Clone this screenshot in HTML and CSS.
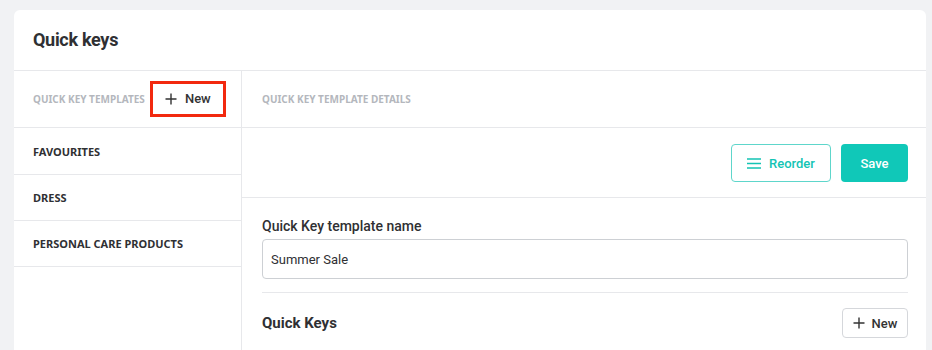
FILE: index.html
```html
<!DOCTYPE html>
<html lang="en">

<head>
    <meta charset="UTF-8">
    <meta name="viewport" content="width=device-width, initial-scale=1.0">
    <title>Quick keys</title>
    <link rel="stylesheet" href="styles.css">
</head>

<body>
    <div class="card">
        <h1 class="card-title">Quick keys</h1>
        <div class="panes">
            <div class="pane-left">
                <div class="pane-head">
                    <span class="caption">Quick key templates</span>
                    <span class="highlight">
                        <button class="btn btn-plain">
                            <svg width="12" height="12" viewBox="0 0 12 12"><path d="M6 0.5v11M0.5 6h11" stroke="#333" stroke-width="1.4" fill="none"/></svg>
                            New
                        </button>
                    </span>
                </div>
                <ul class="template-list">
                    <li>Favourites</li>
                    <li>Dress</li>
                    <li>Personal care products</li>
                </ul>
            </div>
            <div class="pane-right">
                <div class="pane-head">
                    <span class="caption">Quick key template details</span>
                </div>
                <div class="toolbar">
                    <button class="btn btn-outline">
                        <svg width="14" height="11" viewBox="0 0 14 11"><path d="M0 1h14M0 5.5h14M0 10h14" stroke="#14c4b4" stroke-width="1.5" fill="none"/></svg>
                        Reorder
                    </button>
                    <button class="btn btn-primary">Save</button>
                </div>
                <div class="form">
                    <label class="field-label" for="name">Quick Key template name</label>
                    <input id="name" class="field" type="text" value="Summer Sale">
                    <div class="section-head">
                        <h2>Quick Keys</h2>
                        <button class="btn btn-plain btn-small">
                            <svg width="12" height="12" viewBox="0 0 12 12"><path d="M6 0.5v11M0.5 6h11" stroke="#333" stroke-width="1.4" fill="none"/></svg>
                            New
                        </button>
                    </div>
                </div>
            </div>
        </div>
    </div>
</body>

</html>
```

FILE: styles.css
```css
body {
    margin: 0;
    padding: 10px 6px 0 14px;
    background: #f1f2f4;
    font-family: Roboto, 'Noto Sans', sans-serif;
    color: #2f3033;
    height: 350px;
    box-sizing: border-box;
    overflow: hidden;
}

.card {
    background: #fff;
    border-radius: 6px 6px 0 0;
    height: 340px;
}

.card-title {
    margin: 0;
    height: 61px;
    box-sizing: border-box;
    padding: 19px 19px 0;
    font-size: 18px;
    font-weight: 700;
    letter-spacing: -0.3px;
    border-bottom: 1px solid #e7e8eb;
}

.panes {
    display: grid;
    grid-template-columns: 228px 1fr;
    height: 279px;
}

.pane-left {
    border-right: 1px solid #e7e8eb;
}

.pane-head {
    height: 57px;
    box-sizing: border-box;
    display: flex;
    align-items: center;
    padding: 0 0 1px 19px;
    border-bottom: 1px solid #e7e8eb;
}

.pane-right .pane-head {
    padding: 0 20px 1px;
}

.caption {
    font-family: 'Noto Sans', sans-serif;
    font-size: 10px;
    font-weight: 700;
    text-transform: uppercase;
    color: #b4b7bd;
    white-space: nowrap;
}

.highlight {
    margin-left: 5px;
    border: 3px solid #f2290f;
    display: flex;
    flex-shrink: 0;
}

.btn {
    display: inline-flex;
    align-items: center;
    justify-content: center;
    gap: 8px;
    font-family: inherit;
    font-size: 13px;
    font-weight: 500;
    border-radius: 4px;
    cursor: pointer;
}

.btn-plain {
    background: #fff;
    color: #333;
    border: 1px solid #d5d7db;
    height: 38px;
    padding: 0 10px;
}

.highlight .btn-plain {
    border: none;
    border-radius: 0;
    height: 30px;
    width: 70px;
}

.btn-small {
    height: 30px;
    width: 66px;
    padding: 0;
    gap: 7px;
}

.template-list {
    list-style: none;
    margin: 1px 0 0;
    padding: 0;
}

.template-list li {
    height: 46px;
    box-sizing: border-box;
    display: flex;
    align-items: center;
    padding: 0 19px 1px;
    font-family: 'Noto Sans', sans-serif;
    font-size: 11px;
    font-weight: 700;
    text-transform: uppercase;
    border-bottom: 1px solid #e7e8eb;
}

.toolbar {
    height: 70px;
    box-sizing: border-box;
    display: flex;
    align-items: center;
    justify-content: flex-end;
    gap: 10px;
    padding: 1px 18px 0;
    border-bottom: 1px solid #e7e8eb;
}

.btn-outline {
    background: #fff;
    color: #14c4b4;
    border: 1px solid #5ed6cb;
    height: 38px;
    width: 100px;
}

.btn-primary {
    background: #10c8b8;
    color: #fff;
    border: none;
    height: 38px;
    width: 67px;
}

.form {
    padding: 20px 18px 0 20px;
    display: flex;
    flex-direction: column;
}

.field-label {
    font-size: 14px;
    font-weight: 500;
    margin-bottom: 5px;
}

.field {
    height: 40px;
    box-sizing: border-box;
    border: 1px solid #cdd0d4;
    border-radius: 4px;
    padding: 0 8px;
    font-family: inherit;
    font-size: 13px;
    color: #2f3033;
}

.section-head {
    margin-top: 13px;
    border-top: 1px solid #e7e8eb;
    padding-top: 15px;
    display: flex;
    align-items: center;
    justify-content: space-between;
}

.section-head h2 {
    margin: 0;
    font-size: 15px;
    font-weight: 700;
}
```
